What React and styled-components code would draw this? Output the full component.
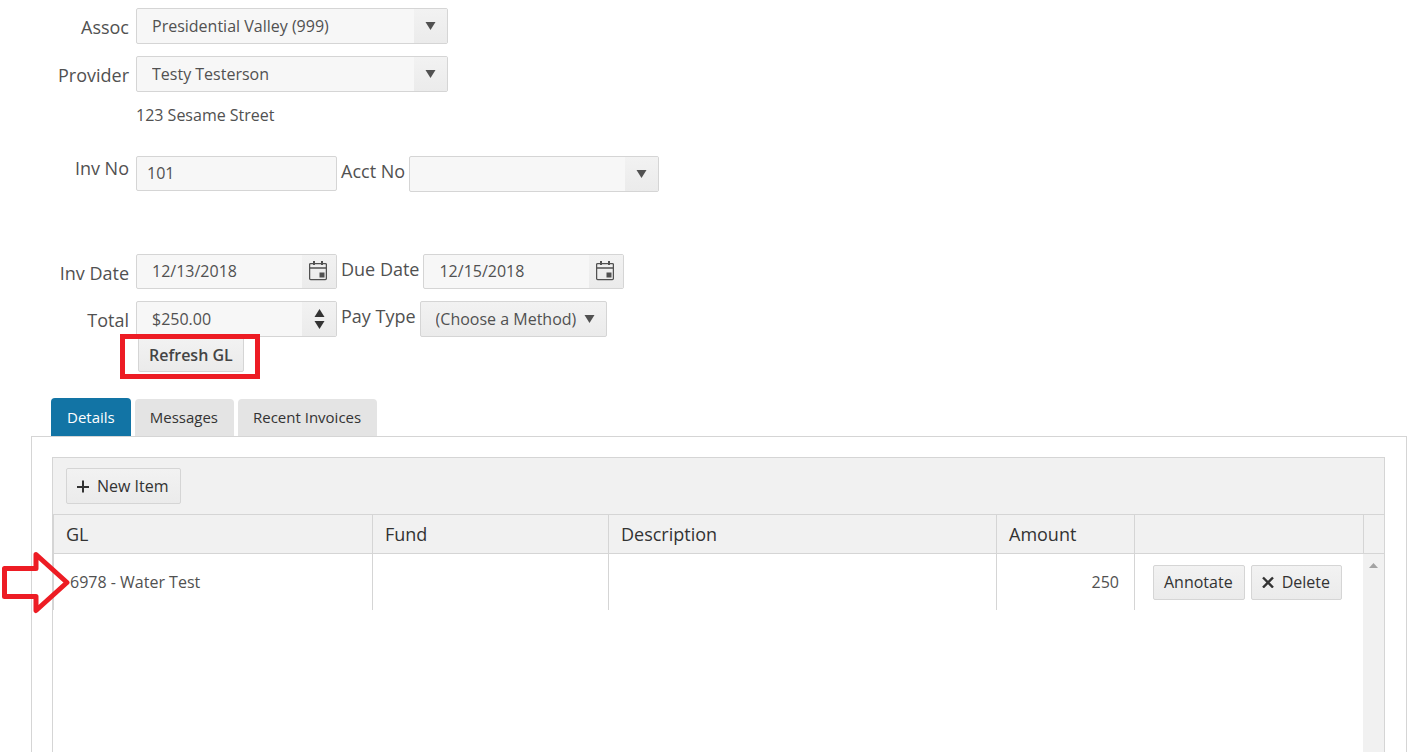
import React, { useState } from 'react';
import styled, { createGlobalStyle, css } from 'styled-components';

const GlobalStyle = createGlobalStyle`
  * {
    box-sizing: border-box;
  }

  body {
    margin: 0;
    background-color: #fff;
    color: #515151;
    font-family: 'Open Sans', 'Noto Sans', sans-serif;
    font-size: 16px;
  }

  button,
  input,
  select {
    color: inherit;
    font-family: inherit;
    font-size: 16px;
  }
`;

const Page = styled.main`
  display: flex;
  flex-direction: column;
  height: 100vh;
  overflow: hidden;
`;

const Form = styled.form`
  padding: 8px 8px 0;
`;

const FieldGroup = styled.div`
  display: flex;
  flex-direction: column;
  gap: 12px;
  margin-top: ${({ $space }) => $space || 0}px;
`;

const FieldRow = styled.div`
  display: flex;
  align-items: flex-start;
  gap: 4px;
`;

const Label = styled.label`
  width: 121px;
  height: 34px;
  margin-right: 3px;
  font-size: 18px;
  line-height: ${({ $top }) => ($top ? '24px' : '38px')};
  text-align: right;
`;

const InlineLabel = styled.label`
  font-size: 18px;
  line-height: 30px;
`;

const Address = styled.p`
  margin: 0 0 0 128px;
  line-height: 22px;
`;

const controlBox = css`
  border: 1px solid #d5d5d5;
  border-radius: 2px;
  background-color: #f7f7f7;
`;

const raised = css`
  background-color: #eee;
  background-image: linear-gradient(#f2f2f2, #ebebeb);
`;

const SelectBox = styled.span`
  ${controlBox}
  display: grid;
  grid-template-columns: 1fr 33px;
  width: ${({ $width }) => $width}px;
  height: 36px;
  overflow: hidden;
`;

const Select = styled.select`
  grid-area: 1 / 1 / 2 / 3;
  width: 100%;
  padding: 0 15px;
  border: none;
  appearance: none;
  outline: none;
  background: none;
`;

const SelectArrow = styled.span`
  ${({ $flat }) => !$flat && raised}
  grid-area: 1 / 2 / 2 / 3;
  display: flex;
  align-items: center;
  justify-content: center;
  pointer-events: none;
`;

const MethodBox = styled(SelectBox)`
  ${raised}
`;

const TextInput = styled.input`
  ${controlBox}
  width: 201px;
  height: 35px;
  padding: 0 10px 2px;
  outline: none;
`;

const PickerBox = styled.span`
  ${controlBox}
  display: flex;
  width: 201px;
  height: ${({ $tall }) => ($tall ? 36 : 35)}px;
  overflow: hidden;
`;

const PickerInput = styled.input`
  flex: 1;
  min-width: 0;
  padding: ${({ $lifted }) => ($lifted ? '0 15px 2px' : '0 15px')};
  border: none;
  outline: none;
  background: none;
`;

const PickerButton = styled.button`
  ${raised}
  display: flex;
  align-items: center;
  justify-content: center;
  width: 34px;
  padding: 0 2px 0 0;
  border: none;
  cursor: pointer;
`;

const Spinner = styled.span`
  ${raised}
  display: flex;
  flex-direction: column;
  justify-content: center;
  gap: 2px;
  width: 34px;
`;

const SpinnerButton = styled.button`
  display: flex;
  justify-content: center;
  padding: 1px 0;
  border: none;
  background: none;
  color: #333;
  cursor: pointer;
`;

const Button = styled.button`
  ${raised}
  display: inline-flex;
  align-items: center;
  gap: 7px;
  height: ${({ $tall }) => ($tall ? 36 : 35)}px;
  padding: 0 11px 0 10px;
  border: 1px solid #d5d5d5;
  border-radius: 2px;
  color: #333;
  cursor: pointer;
`;

const RefreshButton = styled(Button)`
  padding: 0 10px;
  color: #444;
  font-weight: 600;
`;

const RefreshArea = styled.div`
  position: relative;
  display: flex;
  width: fit-content;
  margin-left: 130px;
`;

const Highlight = styled.span`
  position: absolute;
  inset: -3px -16px -7px -18px;
  border: 5px solid #ed1c24;
  pointer-events: none;
`;

const Tabs = styled.div`
  display: flex;
  align-items: flex-end;
  gap: 4px;
  margin: 26px 19px 0 51px;
`;

const Tab = styled.button`
  height: ${({ $active }) => ($active ? 38 : 37)}px;
  padding: ${({ $active }) => ($active ? '0 16px' : '0 16px 1px 15px')};
  border: none;
  border-radius: 4px 4px 0 0;
  background-color: ${({ $active }) => ($active ? '#1274a5' : '#e4e4e4')};
  color: ${({ $active }) => ($active ? '#fff' : '#333')};
  font-size: 15px;
  cursor: pointer;
`;

const TabPanel = styled.section`
  flex: 1;
  display: flex;
  min-height: 0;
  margin: 0 19px 0 31px;
  padding: 20px 21px 0 20px;
  border: 1px solid #d5d5d5;
  border-bottom: none;
`;

const Grid = styled.div`
  flex: 1;
  display: flex;
  flex-direction: column;
  border: 1px solid #d5d5d5;
  border-bottom: none;
`;

const Toolbar = styled.div`
  padding: 10px 13px;
  background-color: #f1f1f1;
`;

const GridBody = styled.div`
  flex: 1;
  display: flex;
`;

const TableArea = styled.div`
  flex: 1;
`;

const Table = styled.table`
  width: 100%;
  border-collapse: separate;
  border-spacing: 0;
  table-layout: fixed;
`;

const HeaderCell = styled.th`
  width: ${({ $width }) => $width || 'auto'};
  height: 40px;
  padding: 0 12px;
  border: 1px solid #d5d5d5;
  border-right: none;
  background-color: #f1f1f1;
  color: #333;
  font-size: 18px;
  font-weight: 400;
  text-align: left;
`;

const Cell = styled.td`
  position: relative;
  height: 56px;
  padding: 0 15px 0 16px;
  border-left: 1px solid #d5d5d5;
  text-align: ${({ $align }) => $align || 'left'};
`;

const Actions = styled.div`
  display: flex;
  gap: 6px;
  padding-left: 2px;
`;

const ScrollColumn = styled.div`
  display: flex;
  flex-direction: column;
  width: 21px;
`;

const ScrollCorner = styled.div`
  height: 40px;
  border: 1px solid #d5d5d5;
  border-right: none;
  background-color: #f1f1f1;
`;

const ScrollTrack = styled.div`
  flex: 1;
  display: flex;
  align-items: flex-start;
  justify-content: center;
  padding-top: 9px;
  background-color: #f1f1f1;
`;

const Pointer = styled.svg`
  position: absolute;
  top: -2px;
  left: -52px;
  pointer-events: none;
`;

const Icon = styled.svg`
  display: block;
  flex: none;
`;

const ArrowDown = () => (
  <Icon width="11" height="8" viewBox="0 0 11 8" fill="currentColor">
    <path d="M0.500 0h10L5.500 8z" />
  </Icon>
);

const ArrowUp = () => (
  <Icon width="11" height="8" viewBox="0 0 11 8" fill="currentColor">
    <path d="M0.500 8h10L5.500 0z" />
  </Icon>
);

const CalendarIcon = () => (
  <Icon width="18" height="21" viewBox="0 0 18 21" fill="none" stroke="currentColor">
    <rect x="0.600" y="2.600" width="16.800" height="16" rx="1" strokeWidth="1.300" />
    <path d="M1 7h16" strokeWidth="1.500" />
    <path d="M5 0v4M13 0v4" strokeWidth="2" />
    <path d="M10.500 11.500h5v5h-5z" fill="currentColor" stroke="none" />
  </Icon>
);

const PlusIcon = () => (
  <Icon width="13" height="14" viewBox="0 0 13 14" stroke="currentColor" strokeWidth="2">
    <path d="M6 1.500v12M0 8h12" />
  </Icon>
);

const CrossIcon = () => (
  <Icon width="13" height="12" viewBox="0 0 13 12" stroke="currentColor" strokeWidth="2.400">
    <path d="M1 1.500l10 10M11 1.500l-10 10" />
  </Icon>
);

const tabs = ['Details', 'Messages', 'Recent Invoices'];

const items = [{ id: 1, gl: '6978 - Water Test', fund: '', description: '', amount: 250 }];

function DateField({ id, value, onChange }) {
  return (
    <PickerBox>
      <PickerInput id={id} type="text" value={value} onChange={(e) => onChange(e.target.value)} $lifted />
      <PickerButton type="button" aria-label="Open calendar">
        <CalendarIcon />
      </PickerButton>
    </PickerBox>
  );
}

function App() {
  const [activeTab, setActiveTab] = useState('Details');
  const [invoiceNo, setInvoiceNo] = useState('101');
  const [invoiceDate, setInvoiceDate] = useState('12/13/2018');
  const [dueDate, setDueDate] = useState('12/15/2018');
  const [total, setTotal] = useState(250);

  return (
    <Page>
      <GlobalStyle />

      <Form onSubmit={(e) => e.preventDefault()}>
        <FieldGroup>
          <FieldRow>
            <Label htmlFor="assoc">Assoc</Label>
            <SelectBox $width={312}>
              <Select id="assoc">
                <option>Presidential Valley (999)</option>
              </Select>
              <SelectArrow><ArrowDown /></SelectArrow>
            </SelectBox>
          </FieldRow>
          <FieldRow>
            <Label htmlFor="provider">Provider</Label>
            <SelectBox $width={312}>
              <Select id="provider">
                <option>Testy Testerson</option>
              </Select>
              <SelectArrow><ArrowDown /></SelectArrow>
            </SelectBox>
          </FieldRow>
          <Address>123 Sesame Street</Address>
        </FieldGroup>

        <FieldGroup $space={30}>
          <FieldRow>
            <Label htmlFor="invNo" $top>Inv No</Label>
            <TextInput
              id="invNo"
              type="text"
              value={invoiceNo}
              onChange={(e) => setInvoiceNo(e.target.value)}
            />
            <InlineLabel htmlFor="acctNo">Acct No</InlineLabel>
            <SelectBox $width={250}>
              <Select id="acctNo">
                <option></option>
              </Select>
              <SelectArrow><ArrowDown /></SelectArrow>
            </SelectBox>
          </FieldRow>
        </FieldGroup>

        <FieldGroup $space={62}>
          <FieldRow>
            <Label htmlFor="invDate">Inv Date</Label>
            <DateField id="invDate" value={invoiceDate} onChange={setInvoiceDate} />
            <InlineLabel htmlFor="dueDate">Due Date</InlineLabel>
            <DateField id="dueDate" value={dueDate} onChange={setDueDate} />
          </FieldRow>
          <FieldRow>
            <Label htmlFor="total">Total</Label>
            <PickerBox $tall>
              <PickerInput id="total" type="text" value={`$${total.toFixed(2)}`} readOnly />
              <Spinner>
                <SpinnerButton type="button" aria-label="Increase" onClick={() => setTotal(total + 1)}>
                  <ArrowUp />
                </SpinnerButton>
                <SpinnerButton type="button" aria-label="Decrease" onClick={() => setTotal(total - 1)}>
                  <ArrowDown />
                </SpinnerButton>
              </Spinner>
            </PickerBox>
            <InlineLabel htmlFor="payType">Pay Type</InlineLabel>
            <MethodBox $width={187}>
              <Select id="payType">
                <option>(Choose a Method)</option>
              </Select>
              <SelectArrow $flat><ArrowDown /></SelectArrow>
            </MethodBox>
          </FieldRow>
        </FieldGroup>

        <RefreshArea>
          <RefreshButton type="button">Refresh GL</RefreshButton>
          <Highlight />
        </RefreshArea>
      </Form>

      <Tabs role="tablist">
        {tabs.map((tab) => (
          <Tab
            key={tab}
            type="button"
            role="tab"
            aria-selected={tab === activeTab}
            $active={tab === activeTab}
            onClick={() => setActiveTab(tab)}
          >
            {tab}
          </Tab>
        ))}
      </Tabs>

      <TabPanel role="tabpanel">
        <Grid>
          <Toolbar>
            <Button type="button" $tall>
              <PlusIcon />
              New Item
            </Button>
          </Toolbar>
          <GridBody>
            <TableArea>
              <Table>
                <thead>
                  <tr>
                    <HeaderCell $width="319px">GL</HeaderCell>
                    <HeaderCell $width="236px">Fund</HeaderCell>
                    <HeaderCell>Description</HeaderCell>
                    <HeaderCell $width="138px">Amount</HeaderCell>
                    <HeaderCell $width="229px" />
                  </tr>
                </thead>
                <tbody>
                  {items.map((item) => (
                    <tr key={item.id}>
                      <Cell>
                        {item.gl}
                        <Pointer width="70" height="62" viewBox="0 0 70 62" fill="none" stroke="#ed1c24" strokeWidth="5">
                          <path d="M2.500 16.500H34V2.500L65 30.500L34 58.500V44.500H2.500z" strokeLinejoin="round" />
                        </Pointer>
                      </Cell>
                      <Cell>{item.fund}</Cell>
                      <Cell>{item.description}</Cell>
                      <Cell $align="right">{item.amount}</Cell>
                      <Cell>
                        <Actions>
                          <Button type="button">Annotate</Button>
                          <Button type="button">
                            <CrossIcon />
                            Delete
                          </Button>
                        </Actions>
                      </Cell>
                    </tr>
                  ))}
                </tbody>
              </Table>
            </TableArea>
            <ScrollColumn>
              <ScrollCorner />
              <ScrollTrack>
                <Icon width="9" height="5" viewBox="0 0 9 5" fill="#a3a3a3">
                  <path d="M0 5h9L4.500 0z" />
                </Icon>
              </ScrollTrack>
            </ScrollColumn>
          </GridBody>
        </Grid>
      </TabPanel>
    </Page>
  );
}

export default App;
